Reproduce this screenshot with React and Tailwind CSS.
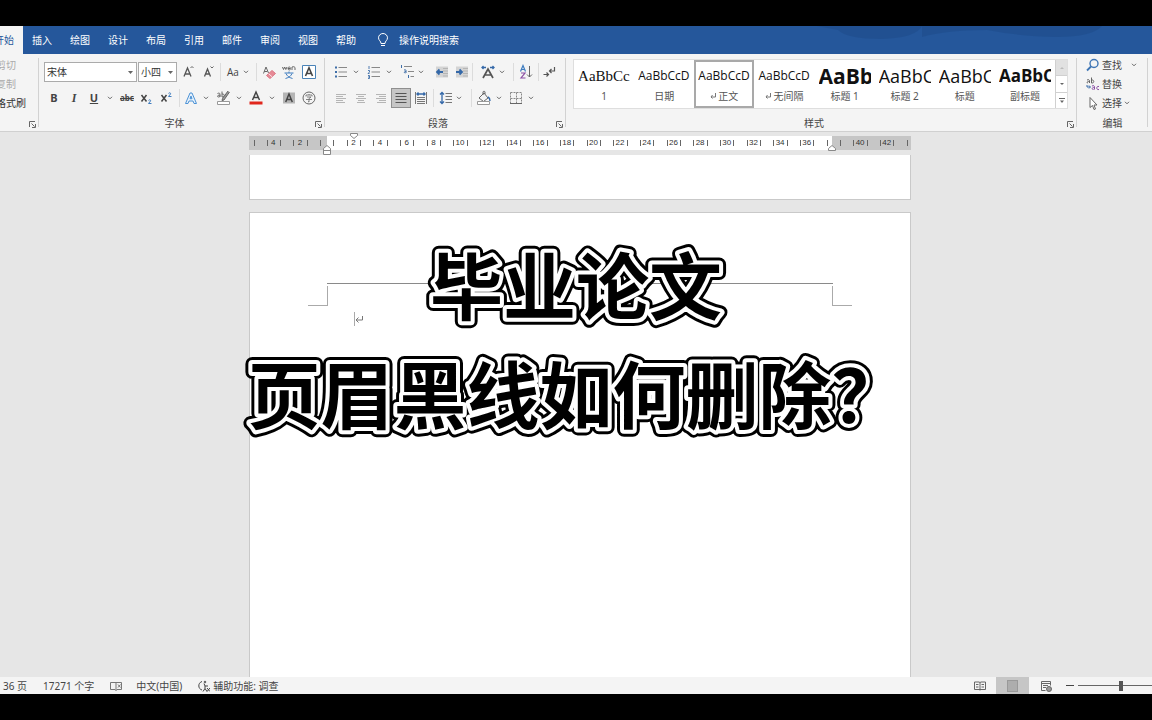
import clsx from 'clsx';

const TABS = ['开始', '插入', '绘图', '设计', '布局', '引用', '邮件', '审阅', '视图', '帮助'];

const STYLES = [
  { name: '1', sample: 'AaBbCc', cls: "font-['Liberation_Serif',serif] text-[15px]" },
  { name: '日期', sample: 'AaBbCcD', cls: "font-['Open_Sans',sans-serif] text-[12px]" },
  { name: '正文', sample: 'AaBbCcD', cls: "font-['Open_Sans',sans-serif] text-[12px]", mark: true, active: true },
  { name: '无间隔', sample: 'AaBbCcD', cls: "font-['Open_Sans',sans-serif] text-[12px]", mark: true },
  { name: '标题 1', sample: 'AaBb', cls: "font-['Open_Sans',sans-serif] text-[21px] font-bold" },
  { name: '标题 2', sample: 'AaBbC', cls: "font-['Open_Sans',sans-serif] text-[18px]" },
  { name: '标题', sample: 'AaBbC', cls: "font-['Open_Sans',sans-serif] text-[18px]" },
  { name: '副标题', sample: 'AaBbC', cls: "font-['Open_Sans',sans-serif] text-[17px] font-bold" },
];

// ruler numbers, null where the margin sits
const RULER = [4, 2, null, 2, 4, 6, 8, 10, 12, 14, 16, 18, 20, 22, 24, 26, 28, 30, 32, 34, 36, null, 40, 42];

function Icon({ children, className = 'size-4' }) {
  return (
    <svg viewBox="0 0 16 16" className={clsx('shrink-0', className)} fill="none" stroke="#666" strokeWidth="1" aria-hidden="true">
      {children}
    </svg>
  );
}

function Btn({ label, children, className = 'w-5' }) {
  return (
    <button type="button" aria-label={label} className={clsx('flex h-5 shrink-0 items-center justify-center text-[#444]', className)}>
      {children}
    </button>
  );
}

function Chev({ label = '更多', className = 'w-[10px]' }) {
  return (
    <Btn label={label} className={className}>
      <svg viewBox="0 0 6 4" className="h-1 w-1.5" fill="none" stroke="#666" aria-hidden="true">
        <path d="M1 .8 3 2.8 5 .8" />
      </svg>
    </Btn>
  );
}

function Sep({ className = 'mx-1' }) {
  return <span className={clsx('h-[18px] w-px shrink-0 bg-[#dcdcdc]', className)} />;
}

function Launcher({ label }) {
  return (
    <button type="button" aria-label={label} className="absolute right-[3px] bottom-[3px] size-[7px]">
      <svg viewBox="0 0 7 7" className="size-[7px]" fill="none" stroke="#666" aria-hidden="true">
        <path d="M.5 6V.5H6M2.5 2.5l3 3M6.5 3v3.5H3" />
      </svg>
    </button>
  );
}

function Group({ title, className, children, launcher = true }) {
  return (
    <section className={clsx('relative flex shrink-0 flex-col', className)}>
      {children}
      <h2 className={clsx('mt-auto h-4 text-center text-[10px] leading-4 text-[#444]', launcher && 'pr-[15px]')}>{title}</h2>
      {launcher && <Launcher label={`${title}设置`} />}
      <span className="absolute top-1 right-0 bottom-1 w-px bg-[#d2d2d2]" />
    </section>
  );
}

function Combo({ label, value, className }) {
  return (
    <label className={clsx('relative block h-5 shrink-0', className)}>
      <span className="sr-only">{label}</span>
      <select className="block h-5 w-full appearance-none border border-[#ababab] bg-white pl-0.5 text-[10px] leading-4 text-[#333]">
        <option>{value}</option>
      </select>
      <svg viewBox="0 0 5 3" className="pointer-events-none absolute top-[9px] right-1 h-[3px] w-[5px]" aria-hidden="true">
        <path d="M0 0h5L2.5 3z" fill="#666" />
      </svg>
    </label>
  );
}

function FontGroup() {
  return (
    <Group title="字体" className="w-[286px] pt-2">
      <div className="flex items-center pl-[5px]">
        <Combo label="字体名称" value="宋体" className="w-[93px]" />
        <Combo label="字号" value="小四" className="ml-px w-[39px]" />
        <Btn label="增大字号" className="ml-[2px] w-5">
          <Icon>
            <path d="M3 12.500 6.500 4l3.500 8.500M4.200 10h4.600" stroke="#555" strokeWidth="1.300" />
            <path d="m9.500 4 1.500-1.500L12.500 4" />
          </Icon>
        </Btn>
        <Btn label="减小字号">
          <Icon>
            <path d="M3.500 12.500 6.500 5l3 7.500M4.700 10h3.800" stroke="#555" strokeWidth="1.300" />
            <path d="m9.500 2.500 1.500 1.500 1.500-1.500" />
          </Icon>
        </Btn>
        <Sep className="ml-px" />
        <Btn label="更改大小写" className="ml-1 w-4 font-['Open_Sans',sans-serif] text-[10px]">Aa</Btn>
        <Chev />
        <Sep className="mr-[2px] ml-[5px]" />
        <Btn label="清除格式">
          <Icon>
            <path d="M2.500 9.500 5 3l2.500 6M3.300 7.500h3" />
            <path d="m5.500 11.500 5.500-5 3.500 3-5.500 5z" fill="#e68a96" stroke="#dc7886" />
            <path d="m7.500 9.700 3.500 3" stroke="#fbe3e6" />
          </Icon>
        </Btn>
        <Btn label="拼音指南" className="w-5 flex-col">
          <Icon>
            <path d="m1.500 3 1 2.500L3.700 3l1.100 2.500L6 3M7 4.500h2.500C9.500 2.500 7 2.500 7 4.500s2 1.500 2.500 1M11 6V3c2-.8 3 0 3 1v2" />
            <path d="M3.500 9h9M8 7.500V9M5 9.500c1 2.500 3 4 6.500 5M11 9.500c-1 2.500-3 4-6.500 5" stroke="#3e7cbf" />
          </Icon>
        </Btn>
        <Btn label="字符边框">
          <Icon>
            <path d="M1.500 1.500h13v13h-13z" stroke="#4a83b8" fill="#fff" />
            <path d="M4.500 12 8 3.800 11.500 12M5.700 9.500h4.600" stroke="#444" strokeWidth="1.600" />
          </Icon>
        </Btn>
      </div>
      <div className="mt-[6px] flex items-center pl-[5px]">
        <Btn label="加粗"><b className="text-[11px]">B</b></Btn>
        <Btn label="倾斜"><i className="font-['Liberation_Serif',serif] text-[12px] font-bold">I</i></Btn>
        <Btn label="下划线"><u className="text-[11px] font-bold">U</u></Btn>
        <Chev className="w-3" />
        <Btn label="删除线" className="ml-px w-5"><s className="text-[8px] font-bold">abc</s></Btn>
        <Btn label="下标">
          <Icon>
            <path d="m2.500 5 5 6.500m0-6.500-5 6.500" stroke="#444" strokeWidth="1.500" />
            <path d="M9.500 10.500c.5-1 2.500-1 2 .5l-2 2.500h3" stroke="#3e7cbf" />
          </Icon>
        </Btn>
        <Btn label="上标">
          <Icon>
            <path d="m2.500 5 5 6.500m0-6.500-5 6.500" stroke="#444" strokeWidth="1.500" />
            <path d="M9.500 3.500c.5-1 2.500-1 2 .5l-2 2.500h3" stroke="#3e7cbf" />
          </Icon>
        </Btn>
        <Sep className="mr-px ml-[2px]" />
        <Btn label="文本效果">
          <Icon>
            <path d="M2.500 13.500 7 3h2l4.500 10.500H11L10 11H6l-1 2.500zM7 8.700h2L8 6z" stroke="#4d93d6" fill="#e6f1fb" />
          </Icon>
        </Btn>
        <Chev />
        <Btn label="突出显示" className="ml-[3px] w-5">
          <Icon>
            <path d="M1.500 3.500c2-1 2.500 0 2.500 1V7M4 5c-3 0-3 2-1.500 2S4 6 4 5.500M6 1.500V7c3 .5 3-3.500 0-3" />
            <path d="m13.500 2-5.500 8-2 .5.500-2L12 1" fill="#999" />
            <path d="M1.500 11.500h12v3h-12z" fill="#fff" stroke="#999" />
          </Icon>
        </Btn>
        <Chev />
        <Btn label="字体颜色" className="ml-[2px] w-5">
          <Icon>
            <path d="M4.500 10 8 2l3.500 8M5.700 7.500h4.600" stroke="#444" strokeWidth="1.500" />
            <path d="M1.500 11.500h13v3h-13z" fill="#e0261c" stroke="none" />
          </Icon>
        </Btn>
        <Chev className="ml-px w-[10px]" />
        <Btn label="字符底纹" className="ml-[2px] w-5">
          <Icon>
            <path d="M2 2.500h12v11H2z" fill="#b5b5b5" stroke="none" />
            <path d="M4.700 12 8 4l3.300 8M6 9.500h4" stroke="#444" strokeWidth="1.500" />
          </Icon>
        </Btn>
        <Btn label="带圈字符">
          <Icon>
            <circle cx="8" cy="8" r="6" />
            <path d="M5 6.500V5h6v1.500M8 4v1M6 7h4L8 8.500V12l-1-.5M5 9.500h6" strokeWidth=".8" />
          </Icon>
        </Btn>
      </div>
    </Group>
  );
}

function ParagraphGroup() {
  return (
    <Group title="段落" className="w-[241px] pt-2">
      <div className="flex items-center pl-[6px]">
        <Btn label="项目符号">
          <Icon>
            <path d="M5.500 3.500H14M5.500 8H14M5.500 12.500H14" stroke="#888" />
            <path d="M2 2.500h2v2H2zM2 7h2v2H2zM2 11.500h2v2H2z" fill="#3e6ea8" stroke="none" />
          </Icon>
        </Btn>
        <Chev />
        <Btn label="编号" className="ml-[3px] w-5">
          <Icon>
            <path d="M5.500 3.500H14M5.500 8H14M5.500 12.500H14" stroke="#888" />
            <path d="M3 2v3M2 6.500h1.500V8L2 9.500h1.500M2 11.500h1.500v3H2M2 13h1.500" stroke="#3e6ea8" strokeWidth=".9" />
          </Icon>
        </Btn>
        <Chev />
        <Btn label="多级列表" className="ml-1 w-5">
          <Icon>
            <path d="M4 2.500h8M8 7.500h6M10.500 12.500H14" stroke="#888" />
            <path d="M1.500 1v3M4 6c2-.5 2 0 2 1v2M6 7.500c-2.500 0-2 1.500-.5 1.500M8.500 11v3" stroke="#3e6ea8" />
          </Icon>
        </Btn>
        <Chev className="w-1.5" />
        <Btn label="减少缩进" className="ml-[8px] w-5">
          <Icon>
            <path d="M2 2.500h12v11H2z" fill="#d4d4d4" stroke="none" />
            <path d="M9 4.500h5M9 7h5M9 9.500h5M9 12h5" stroke="#b5b5b5" />
            <path d="M9 8H3m2.500-2.500L3 8l2.500 2.500" stroke="#3468a8" strokeWidth="1.800" />
          </Icon>
        </Btn>
        <Btn label="增加缩进">
          <Icon>
            <path d="M2 2.500h12v11H2z" fill="#d4d4d4" stroke="none" />
            <path d="M9 4.500h5M9 7h5M9 9.500h5M9 12h5" stroke="#b5b5b5" />
            <path d="M2 8h6M5.500 5.500 8 8l-2.500 2.500" stroke="#3468a8" strokeWidth="1.800" />
          </Icon>
        </Btn>
        <Sep className="mr-[5px]" />
        <Btn label="中文版式">
          <Icon>
            <path d="M3 14 8 5l5 9M5 11h6" stroke="#555" strokeWidth="1.700" />
            <path d="M6 3.500H2M3.500 2 2 3.500 3.500 5M10 3.500h4M12.500 2 14 3.500 12.500 5" stroke="#3468a8" strokeWidth="1.300" />
          </Icon>
        </Btn>
        <Chev className="w-2" />
        <Sep className="mr-[2px] ml-[7px]" />
        <Btn label="排序">
          <Icon>
            <path d="M2.500 7.500 5 1.500l2.500 6M3.500 5.500h3" stroke="#3e7cbf" strokeWidth="1.200" />
            <path d="M3 9h4l-4 5h4.500" stroke="#8a4fa3" strokeWidth="1.200" />
            <path d="M11.500 2v11M9 10.500l2.500 2.500 2.500-2.500" />
          </Icon>
        </Btn>
        <Sep className="mx-[2px]" />
        <Btn label="显示编辑标记" className="w-4">
          <Icon>
            <path d="M13.500 3v4H8.500m2-2-2 2 2 2M2.500 10.500h5M5.500 8.500l2 2-2 2" stroke="#555" strokeWidth="1.200" />
          </Icon>
        </Btn>
      </div>
      <div className="mt-[6px] flex items-center pl-[6px]">
        <Btn label="左对齐">
          <Icon><path d="M3 4.500h10M3 6.500h7M3 8.500h10M3 10.500h7M3 12.500h9" stroke="#b5b5b5" /></Icon>
        </Btn>
        <Btn label="居中">
          <Icon><path d="M3 4.500h10M5 6.500h6M3 8.500h10M5 10.500h6M4 12.500h8" stroke="#b5b5b5" /></Icon>
        </Btn>
        <Btn label="右对齐">
          <Icon><path d="M3 4.500h10M6 6.500h7M3 8.500h10M6 10.500h7M4 12.500h9" stroke="#b5b5b5" /></Icon>
        </Btn>
        <Btn label="两端对齐" className="w-5 border border-[#8f8f8f] bg-[#c6c6c6]">
          <Icon><path d="M2.500 3.500h11M2.500 6.500h11M2.500 9.500h11M2.500 12.500h11" stroke="#555" /></Icon>
        </Btn>
        <Btn label="分散对齐">
          <Icon>
            <path d="M2.500 2v12M13.500 2v12M4 9.500h8M4 11.500h8M4 13.500h8M4 7.500h8" stroke="#777" />
            <path d="M4 4h8M5.500 2.500 4 4l1.500 1.500M10.500 2.500 12 4l-1.500 1.500" stroke="#3468a8" strokeWidth="1.400" />
          </Icon>
        </Btn>
        <Sep className="mr-1 ml-[2px]" />
        <Btn label="行距" className="w-4">
          <Icon>
            <path d="M7.500 3.500H14M7.500 6.500H14M7.500 9.500H14M7.500 12.500H14" stroke="#777" />
            <path d="M4 2.500v11M2 4.500l2-2 2 2M2 11.500l2 2 2-2" stroke="#3468a8" strokeWidth="1.300" />
          </Icon>
        </Btn>
        <Chev />
        <Sep className="mr-[2px] ml-[7px]" />
        <Btn label="底纹">
          <Icon>
            <path d="m3 8 5-5 4 5-4.500 3.500zM7 5V2c0-1 2-1 2 0v2" />
            <path d="M12 7c2 1 2 2 2 4" stroke="#3468a8" strokeWidth="1.400" />
            <path d="M1.500 11.500h12v3h-12z" fill="#fff" stroke="#999" />
          </Icon>
        </Btn>
        <Chev />
        <Btn label="边框" className="ml-[2px] w-5">
          <Icon>
            <path d="M2.500 2.500h11v11h-11zM8.500 2.500v11M2.500 8.500h11" stroke="#888" strokeDasharray="2 1" />
            <path d="M2 13.500h12" />
          </Icon>
        </Btn>
        <Chev />
      </div>
    </Group>
  );
}

function StylesGroup() {
  return (
    <Group title="样式" className="min-w-[511px] flex-1 pt-[5px]">
      <div className="mr-[9px] ml-[7px] flex h-[50px] border border-[#dedede] bg-white">
        {STYLES.map((s) => (
          <button
            type="button"
            key={s.name}
            className={clsx(
              'flex min-w-0 flex-1 flex-col items-center overflow-hidden',
              s.active && 'outline-2 -outline-offset-2 outline-[#a9a9a9]',
            )}
          >
            <span className={clsx('block h-7 w-[52px] overflow-hidden text-left leading-8 whitespace-nowrap text-[#111]', s.cls)}>
              {s.sample}
            </span>
            <span className="flex items-center gap-0.5 text-[10px] leading-4 text-[#555]">
              {s.mark && (
                <svg viewBox="0 0 6 6" className="size-1.5" fill="none" stroke="#777" aria-hidden="true">
                  <path d="M5.500 0v4H1m1.500-2L1 4l1.500 1.500" />
                </svg>
              )}
              {s.name}
            </span>
          </button>
        ))}
        <div className="flex w-3 shrink-0 flex-col divide-y divide-[#d0d0d0] border-l border-[#d0d0d0]">
          <button type="button" aria-label="上一行" className="flex flex-1 items-center justify-center bg-[#e1e1e1]">
            <svg viewBox="0 0 4 2" className="h-0.5 w-1" aria-hidden="true"><path d="M0 2h4L2 0z" fill="#bbb" /></svg>
          </button>
          <button type="button" aria-label="下一行" className="flex flex-1 items-center justify-center">
            <svg viewBox="0 0 4 2" className="h-0.5 w-1" aria-hidden="true"><path d="M0 0h4L2 2z" fill="#666" /></svg>
          </button>
          <button type="button" aria-label="其他样式" className="flex flex-1 items-center justify-center">
            <svg viewBox="0 0 6 5" className="h-[5px] w-1.5" aria-hidden="true"><path d="M0 0h6v1H0zM1 2.500h4L3 5z" fill="#666" /></svg>
          </button>
        </div>
      </div>
    </Group>
  );
}

function EditGroup() {
  return (
    <Group title="编辑" className="mr-1 w-[71px] pt-px" launcher={false}>
      <div className="flex flex-col pl-2 text-[10px] text-[#333]">
        <div className="flex items-center">
          <Btn className="gap-px">
            <Icon>
              <circle cx="9" cy="6.500" r="4" stroke="#3e75b5" strokeWidth="1.400" />
              <path d="m6 9.500-4 4" stroke="#3e75b5" strokeWidth="1.800" />
            </Icon>
            <span>查找</span>
          </Btn>
          <Chev className="ml-[7px] w-[10px]" />
        </div>
        <Btn className="h-[18px] justify-start gap-px self-start">
          <Icon>
            <path d="M2 4c2-.8 2.500 0 2.500 1v2M4.500 5.500c-3 0-3 1.500-1.500 1.500M6.500 1.500V7c3 .5 3-3.500 0-3" />
            <path d="M2 9v2h3M4 9.500 5.500 11 4 12.500" stroke="#3468a8" />
            <path d="M7 10c2-.8 2.500 0 2.500 1v2.500M9.500 11.500c-3 0-3 2-1 2M14 10.500c-3-1-3 4 0 3" stroke="#8a4fa3" />
          </Icon>
          <span>替换</span>
        </Btn>
        <div className="flex items-center">
          <Btn className="gap-px">
            <Icon><path d="M5 2.500v10l2.500-2 1.500 4 1.500-.5L9 10h3z" fill="#fff" /></Icon>
            <span>选择</span>
          </Btn>
          <Chev className="w-[10px]" />
        </div>
      </div>
    </Group>
  );
}

function Ribbon() {
  return (
    <div className="flex h-[78px] shrink-0 overflow-hidden border-b border-[#d0d0d0] bg-[#f4f4f4]">
      <section className="relative flex w-[39px] shrink-0 flex-col items-start pt-px text-[10px] whitespace-nowrap" aria-label="剪贴板">
        <button type="button" className="-ml-1 h-5 text-[#aaa]">剪切</button>
        <button type="button" className="-ml-1 h-[18px] text-[#aaa]">复制</button>
        <button type="button" className="-ml-1 h-5 text-[#333]">格式刷</button>
        <Launcher label="剪贴板设置" />
        <span className="absolute top-1 right-0 bottom-1 w-px bg-[#d2d2d2]" />
      </section>
      <FontGroup />
      <ParagraphGroup />
      <StylesGroup />
      <EditGroup />
    </div>
  );
}

function TabBar() {
  return (
    <header className="relative flex h-7 shrink-0 overflow-hidden bg-[#25579b]">
      {/* title bar artwork */}
      <svg viewBox="0 0 340 20" className="absolute top-0 right-0 h-5 w-[340px]" fill="#1f4d8c" opacity=".6" aria-hidden="true">
        <path d="M5 0h105q-6 12-40 13-35 0-44-9zM110 0h180q-10 11-45 11-40-1-70-7-40 0-65 7z" />
      </svg>
      <nav className="-ml-[15px] flex text-[10px] text-white">
        {TABS.map((tab, i) => (
          <button type="button" key={tab} className={clsx('w-[38px]', i === 0 && 'bg-[#f4f4f4] text-[#25579b]')}>
            {tab}
          </button>
        ))}
      </nav>
      <button type="button" className="ml-3 flex items-center gap-[10px] text-[10px] text-white">
        <svg viewBox="0 0 12 14" className="h-3.5 w-3" fill="none" stroke="#fff" aria-hidden="true">
          <path d="M4 10.500C4 8 1.500 7.500 1.500 4.800a4.500 4.300 0 0 1 9 0C10.500 7.500 8 8 8 10.500zM4 12.500h4" />
        </svg>
        操作说明搜索
      </button>
    </header>
  );
}

function Ruler() {
  return (
    <div className="relative flex h-[14px] justify-between bg-white px-[11px]">
      <span className="absolute inset-y-0 left-0 w-[78px] bg-[#c6c6c6]" />
      <span className="absolute inset-y-0 right-0 w-[79px] bg-[#c6c6c6]" />
      <span className="absolute top-1 left-[5px] h-[6px] w-px bg-[#666]" />
      <span className="absolute top-1 right-[3px] h-[6px] w-px bg-[#666]" />
      {RULER.map((n, i) => (
        <span key={i} className="relative flex flex-1 items-center justify-center">
          <span className="absolute top-1 left-1/4 h-[6px] w-px bg-[#666]" />
          <span className="font-['Liberation_Sans',sans-serif] text-[8px] leading-none text-[#333]">{n}</span>
          <span className="absolute top-1 left-3/4 h-[6px] w-px bg-[#666]" />
        </span>
      ))}
      <svg viewBox="0 0 8 6" className="absolute -top-[3px] left-[101px] h-1.5 w-2" fill="#fff" stroke="#888" aria-hidden="true">
        <path d="M.5.5h7v2L4 5.500.5 2.500z" />
      </svg>
      <svg viewBox="0 0 8 10" className="absolute top-[9px] left-[74px] h-2.5 w-2" fill="#fff" stroke="#888" aria-hidden="true">
        <path d="M.5 9.500v-6L4 .5l3.500 3v6zM.5 5.500h7" />
      </svg>
      <svg viewBox="0 0 8 6" className="absolute top-[9px] right-[75px] h-1.5 w-2" fill="#fff" stroke="#888" aria-hidden="true">
        <path d="M.5 5.500v-2L4 .5l3.500 3v2z" />
      </svg>
    </div>
  );
}

// Caption laid over the page: wide black outline, white outline, black fill.
function Caption() {
  return (
    <h1 className="absolute inset-x-0 top-[100px] z-10">
      <svg className="block h-[218px] w-full text-[73px] font-bold" strokeLinejoin="round" textAnchor="middle">
        <g stroke="#000" strokeWidth="14">
          <g id="caption">
            <text x="50%" y="82">毕业论文</text>
            <text x="50%" y="191">页眉黑线如何删除？</text>
          </g>
        </g>
        <use href="#caption" stroke="#fff" strokeWidth="8" paintOrder="stroke" />
      </svg>
    </h1>
  );
}

function Document() {
  return (
    <main className="relative flex min-h-0 flex-1 justify-center overflow-hidden bg-[#e6e6e6] pt-1 pl-2">
      <div className="flex w-[662px] flex-col">
        <Ruler />
        <div className="mt-[5px] h-[45px] shrink-0 border border-t-0 border-[#c9c9c9] bg-white" />
        <article className="mt-3 flex-1 border border-b-0 border-[#c9c9c9] bg-white pt-[70px]">
          <hr className="mx-[77px] border-[#8a8a8a]" />
          <div className="mx-[58px] mt-[2px] flex justify-between">
            <span className="size-5 border-r border-b border-[#aaa]" />
            <span className="size-5 border-b border-l border-[#aaa]" />
          </div>
          <p className="mt-[6px] ml-[104px] flex h-[14px] items-center border-l border-[#aaa]">
            <svg viewBox="0 0 8 8" className="size-2" fill="none" stroke="#777" aria-hidden="true">
              <path d="M7.500 1v4H1m2.500-2.500L1 5l2.500 2.500" />
            </svg>
          </p>
        </article>
      </div>
      <Caption />
    </main>
  );
}

function StatusBar() {
  return (
    <footer className="flex h-[17px] shrink-0 items-center bg-[#f4f4f4] text-[10px] leading-4 whitespace-nowrap text-[#444]">
      <span className="ml-[3px]">36 页</span>
      <span className="ml-4">17271 个字</span>
      <button type="button" aria-label="校对" className="ml-4">
        <svg viewBox="0 0 12 12" className="size-3" fill="none" stroke="#777" aria-hidden="true">
          <path d="M6 2.500v8M6 2.500H.5v7H5l1 1 1-1h4.500v-7zM8 4.500l2.500 3m0-3L8 7.500" />
        </svg>
      </button>
      <span className="ml-[14px]">中文(中国)</span>
      <button type="button" className="ml-4 flex items-center gap-[3px]">
        <svg viewBox="0 0 12 12" className="size-3" fill="none" stroke="#444" aria-hidden="true">
          <path d="M4 1.500C-.5 3 0 9 4 10M6 3.500l1 2.500h3M7 6v2.500L5 11.500M7 8.500l2 3M9 8l3 3.500m0-3.500L9 11.500" />
          <circle cx="7" cy="2" r=".8" />
        </svg>
        辅助功能: 调查
      </button>
      <button type="button" aria-label="阅读视图" className="ml-auto flex h-full w-[33px] items-center justify-center">
        <svg viewBox="0 0 12 10" className="h-2.5 w-3" fill="none" stroke="#666" aria-hidden="true">
          <path d="M6 1.500v8M.5 1h4.500l1 .5 1-.5h4.500v7.500H.5zM2 3.500h2.500M2 6h2.500M7.500 3.500H10M7.500 6H10" />
        </svg>
      </button>
      <button type="button" aria-label="页面视图" className="flex h-full w-[33px] items-center justify-center bg-[#c6c6c6]">
        <span className="h-3 w-[11px] border border-[#999] bg-[#adadad]" />
      </button>
      <button type="button" aria-label="Web 版式视图" className="flex h-full w-[33px] items-center justify-center">
        <svg viewBox="0 0 12 12" className="size-3" fill="none" stroke="#666" aria-hidden="true">
          <path d="M5.500 10.500h-4v-9h9v4M1.500 3.500h9M3 5.500h5M3 7.500h3" />
          <circle cx="9" cy="9" r="2.500" fill="#999" />
        </svg>
      </button>
      <button type="button" aria-label="缩小" className="ml-1 flex h-full w-2 items-center">
        <span className="h-px w-2 bg-[#444]" />
      </button>
      <input
        type="range"
        aria-label="缩放"
        defaultValue={58}
        className="ml-1 h-[10px] w-[74px] appearance-none bg-[linear-gradient(#666,#666)] bg-[length:100%_1px] bg-center bg-no-repeat [&::-webkit-slider-thumb]:h-[10px] [&::-webkit-slider-thumb]:w-1 [&::-webkit-slider-thumb]:appearance-none [&::-webkit-slider-thumb]:bg-[#555]"
      />
    </footer>
  );
}

export default function App() {
  return (
    <div lang="zh-CN" className="flex h-screen flex-col overflow-hidden bg-black py-[26px] font-['Noto_Sans','Noto_Sans_CJK_SC',sans-serif]">
      <TabBar />
      <Ribbon />
      <Document />
      <StatusBar />
    </div>
  );
}
